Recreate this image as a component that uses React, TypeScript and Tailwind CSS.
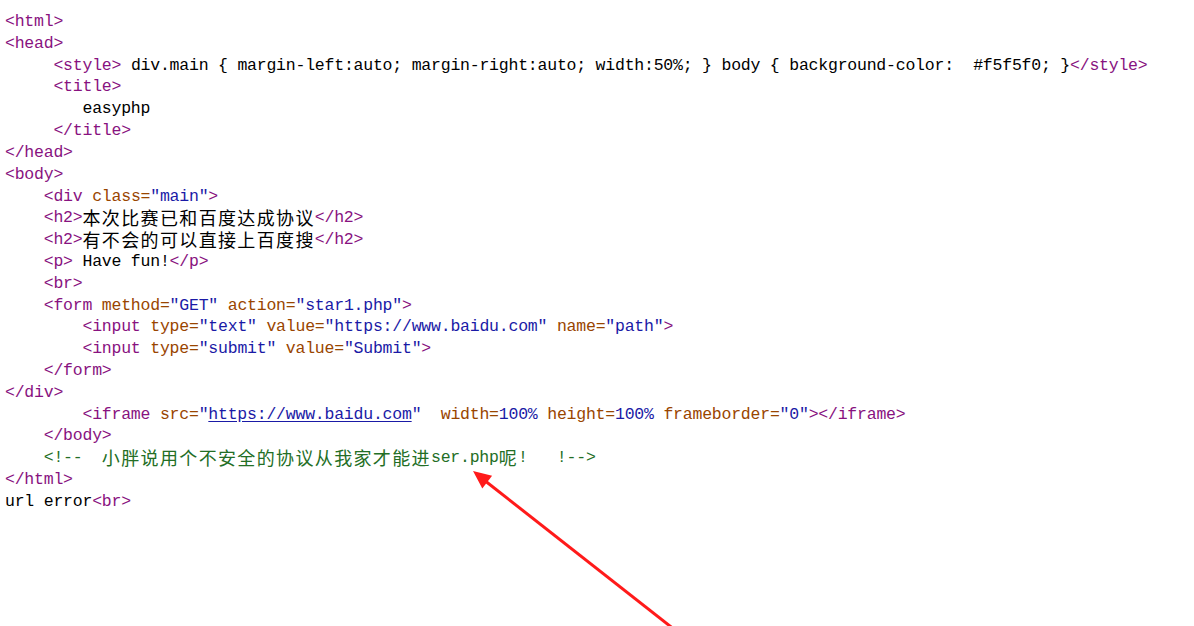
import React from "react";

const T = ({ children }: { children: React.ReactNode }) => (
  <span className="text-[#881280]">{children}</span>
);
const A = ({ children }: { children: React.ReactNode }) => (
  <span className="text-[#994500]">{children}</span>
);
const V = ({ children }: { children: React.ReactNode }) => (
  <span className="text-[#1a1aa6]">{children}</span>
);
const Z = ({ children }: { children: React.ReactNode }) => (
  <span className="inline-block h-[21.82px] align-top text-[18px] leading-[21.82px] tracking-[1.36px] [font-family:'Noto_Sans_CJK_SC','Noto_Sans_CJK_JP',sans-serif]">
    {children}
  </span>
);

const Line = ({ children }: { children?: React.ReactNode }) => (
  <div className="h-[21.82px] leading-[21.82px] whitespace-pre">{children}</div>
);

export default function App() {
  return (
    <div className="relative min-h-[626px] w-[1194px] overflow-hidden bg-white">
      <div className="pl-[5px] pt-[11px] text-[16.5px] tracking-[-0.22px] text-black [font-family:'Liberation_Mono','DejaVu_Sans_Mono',monospace]">
        <Line>
          <T>{"<html>"}</T>
        </Line>
        <Line>
          <T>{"<head>"}</T>
        </Line>
        <Line>
          {"     "}
          <T>{"<style>"}</T>
          {" div.main { margin-left:auto; margin-right:auto; width:50%; } body { background-color:  #f5f5f0; }"}
          <T>{"</style>"}</T>
        </Line>
        <Line>
          {"     "}
          <T>{"<title>"}</T>
        </Line>
        <Line>{"        easyphp"}</Line>
        <Line>
          {"     "}
          <T>{"</title>"}</T>
        </Line>
        <Line>
          <T>{"</head>"}</T>
        </Line>
        <Line>
          <T>{"<body>"}</T>
        </Line>
        <Line>
          {"    "}
          <T>{"<div "}</T>
          <A>{"class="}</A>
          <V>{'"main"'}</V>
          <T>{">"}</T>
        </Line>
        <Line>
          {"    "}
          <T>{"<h2>"}</T>
          <Z>本次比赛已和百度达成协议</Z>
          <T>{"</h2>"}</T>
        </Line>
        <Line>
          {"    "}
          <T>{"<h2>"}</T>
          <Z>有不会的可以直接上百度搜</Z>
          <T>{"</h2>"}</T>
        </Line>
        <Line>
          {"    "}
          <T>{"<p>"}</T>
          {" Have fun!"}
          <T>{"</p>"}</T>
        </Line>
        <Line>
          {"    "}
          <T>{"<br>"}</T>
        </Line>
        <Line>
          {"    "}
          <T>{"<form "}</T>
          <A>{"method="}</A>
          <V>{'"GET"'}</V>
          <A>{" action="}</A>
          <V>{'"star1.php"'}</V>
          <T>{">"}</T>
        </Line>
        <Line>
          {"        "}
          <T>{"<input "}</T>
          <A>{"type="}</A>
          <V>{'"text"'}</V>
          <A>{" value="}</A>
          <V>{'"https://www.baidu.com"'}</V>
          <A>{" name="}</A>
          <V>{'"path"'}</V>
          <T>{">"}</T>
        </Line>
        <Line>
          {"        "}
          <T>{"<input "}</T>
          <A>{"type="}</A>
          <V>{'"submit"'}</V>
          <A>{" value="}</A>
          <V>{'"Submit"'}</V>
          <T>{">"}</T>
        </Line>
        <Line>
          {"    "}
          <T>{"</form>"}</T>
        </Line>
        <Line>
          <T>{"</div>"}</T>
        </Line>
        <Line>
          {"        "}
          <T>{"<iframe "}</T>
          <A>{"src="}</A>
          <V>{'"'}</V>
          <span className="text-[#1a1aa6] underline decoration-[#1a1aa6] underline-offset-2">
            https://www.baidu.com
          </span>
          <V>{'"'}</V>
          <A>{"  width="}</A>
          <V>{"100%"}</V>
          <A>{" height="}</A>
          <V>{"100%"}</V>
          <A>{" frameborder="}</A>
          <V>{'"0"'}</V>
          <T>{"></iframe>"}</T>
        </Line>
        <Line>
          {"    "}
          <T>{"</body>"}</T>
        </Line>
        <Line>
          {"    "}
          <span className="text-[#236e25]">
            {"<!--  "}
            <Z>小胖说用个不安全的协议从我家才能进</Z>
            {"ser.php"}
            <Z>呢</Z>
            {"!   !-->"}
          </span>
        </Line>
        <Line>
          <T>{"</html>"}</T>
        </Line>
        <Line>
          {"url error"}
          <T>{"<br>"}</T>
        </Line>
      </div>
      <svg
        className="pointer-events-none absolute left-0 top-0"
        width="1194"
        height="626"
        viewBox="0 0 1194 626"
      >
        <line x1="484" y1="480" x2="675" y2="630" stroke="#ff1a1a" strokeWidth="3" />
        <polygon points="473,471 482.3,488.4 492.1,475.8" fill="#ff1a1a" />
      </svg>
    </div>
  );
}
